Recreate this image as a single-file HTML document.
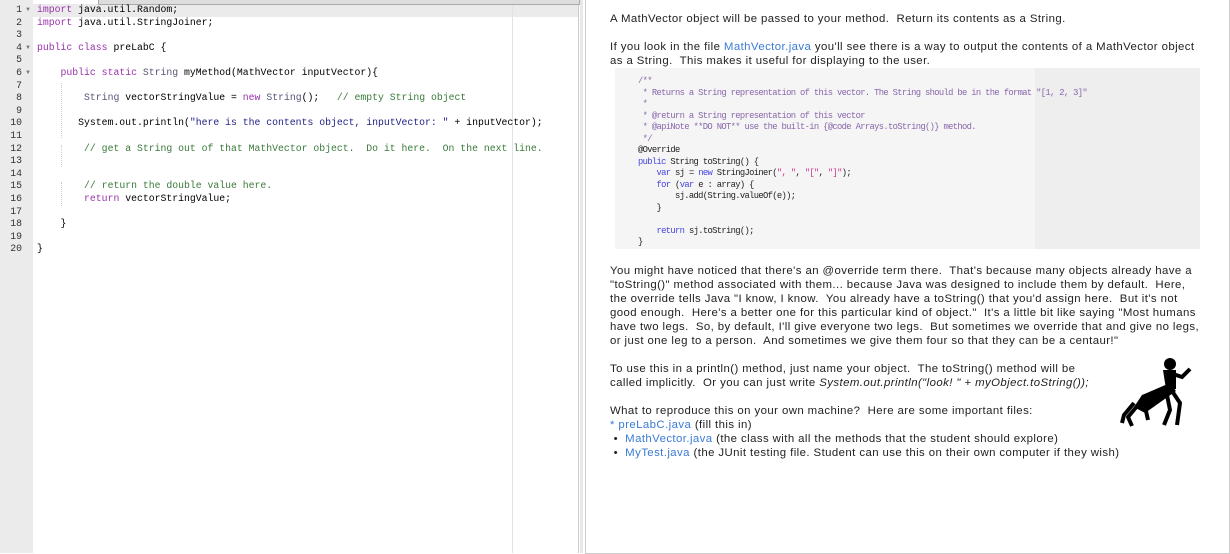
<!DOCTYPE html>
<html><head><meta charset="utf-8"><style>
body{margin:0;width:1230px;height:553px;overflow:hidden;background:#fff;position:relative;font-family:"Liberation Sans",sans-serif}
#left{position:absolute;left:0;top:0;width:578px;height:553px;background:#fff;border-right:1px solid #ccc}
#topbar{position:absolute;left:98px;top:0;width:480px;height:4px;border:1px solid #aaa;border-top:none;background:#ddd}
#gutter{position:absolute;left:0;top:0;width:33px;height:553px;background:#ebebeb}
#hl{position:absolute;left:33px;top:4px;width:545px;height:13px;background:#ebebeb}
#ruler{position:absolute;left:512px;top:4px;width:1px;height:549px;background:#e2e2e2}
.ln{position:absolute;left:0;width:22px;text-align:right;font:9.8px "Liberation Mono",monospace;color:#333}
.fold{position:absolute;left:25px;font-size:6px;color:#777}
.code{position:absolute;left:37px;font:9.8px "Liberation Mono",monospace;white-space:pre;color:#000}
.k{color:#93a}.t{color:#557}.s{color:#228}.c{color:#3a7a3a}.g{position:absolute;width:1px;border-left:1px dotted #ccc}
#sep{position:absolute;left:580px;top:0;width:3px;height:553px;background:#e8e8e8}
#right{position:absolute;left:585px;top:0;width:643px;height:553px;border:1px solid #ccc;border-top:none}
.p{position:absolute;left:610px;font-size:11.4px;line-height:14px;color:#222;white-space:pre;letter-spacing:0.42px}
a{color:#3a7bd5;text-decoration:none}
#cb{position:absolute;left:615px;top:68px;width:585px;height:181px;background:#f5f5f5}
#cb2{position:absolute;left:1035px;top:68px;width:165px;height:181px;background:#eeeeee}
.cc{position:absolute;left:638px;font:8.8px "Liberation Mono",monospace;white-space:pre;color:#222;letter-spacing:-0.65px}
.jd{color:#86a}.kw{color:#44d}.st{color:#c38}
</style></head><body>
<div id="left">
<div id="gutter"></div><div id="hl"></div><div id="ruler"></div>
<div id="topbar"></div>
</div>
<div class="ln" style="top:4px">1</div><div class="ln" style="top:16.6px">2</div><div class="ln" style="top:29.2px">3</div><div class="ln" style="top:41.8px">4</div><div class="ln" style="top:54.4px">5</div><div class="ln" style="top:67px">6</div><div class="ln" style="top:79.6px">7</div><div class="ln" style="top:92.2px">8</div><div class="ln" style="top:104.8px">9</div><div class="ln" style="top:117.4px">10</div><div class="ln" style="top:130px">11</div><div class="ln" style="top:142.6px">12</div><div class="ln" style="top:155.2px">13</div><div class="ln" style="top:167.8px">14</div><div class="ln" style="top:180.4px">15</div><div class="ln" style="top:193px">16</div><div class="ln" style="top:205.6px">17</div><div class="ln" style="top:218.2px">18</div><div class="ln" style="top:230.8px">19</div><div class="ln" style="top:243.4px">20</div>
<div class="fold" style="top:7px">▼</div><div class="fold" style="top:45px">▼</div><div class="fold" style="top:70px">▼</div>
<div class="g" style="left:61px;top:83px;height:55px"></div><div class="g" style="left:61px;top:145px;height:22px"></div><div class="g" style="left:61px;top:182px;height:24px"></div>
<div class="code" style="top:4px"><span class="k">import</span> java.util.Random;</div>
<div class="code" style="top:16.6px"><span class="k">import</span> java.util.StringJoiner;</div>
<div class="code" style="top:41.8px"><span class="k">public class</span> preLabC {</div>
<div class="code" style="top:67px">    <span class="k">public static</span> <span class="t">String</span> myMethod(MathVector inputVector){</div>
<div class="code" style="top:92.2px">        <span class="t">String</span> vectorStringValue = <span class="k">new</span> <span class="t">String</span>();   <span class="c">// empty String object</span></div>
<div class="code" style="top:117.4px">       System.out.println(<span class="s">"here is the contents object, inputVector: "</span> + inputVector);</div>
<div class="code" style="top:142.6px">        <span class="c">// get a String out of that MathVector object.  Do it here.  On the next line.</span></div>
<div class="code" style="top:180.4px">        <span class="c">// return the double value here.</span></div>
<div class="code" style="top:193px">        <span class="k">return</span> vectorStringValue;</div>
<div class="code" style="top:218.2px">    }</div>
<div class="code" style="top:243.4px">}</div>
<div id="sep"></div>
<div id="right"></div>
<div class="p" style="top:12px">A MathVector object will be passed to your method.  Return its contents as a String.</div>
<div class="p" style="top:40px">If you look in the file <a>MathVector.java</a> you'll see there is a way to output the contents of a MathVector object
as a String.  This makes it useful for displaying to the user.</div>
<div id="cb"></div><div id="cb2"></div>
<div class="cc jd" style="top:76px">/**</div>
<div class="cc jd" style="top:87.5px"> * Returns a String representation of this vector. The String should be in the format "[1, 2, 3]"</div>
<div class="cc jd" style="top:99px"> *</div>
<div class="cc jd" style="top:110.5px"> * @return a String representation of this vector</div>
<div class="cc jd" style="top:122px"> * @apiNote **DO NOT** use the built-in {@code Arrays.toString()} method.</div>
<div class="cc jd" style="top:133.5px"> */</div>
<div class="cc" style="top:145px">@Override</div>
<div class="cc" style="top:156.5px"><span class="kw">public</span> String toString() {</div>
<div class="cc" style="top:168px">    <span class="kw">var</span> sj = <span class="kw">new</span> StringJoiner(<span class="st">", "</span>, <span class="st">"["</span>, <span class="st">"]"</span>);</div>
<div class="cc" style="top:179.5px">    <span class="kw">for</span> (<span class="kw">var</span> e : array) {</div>
<div class="cc" style="top:191px">        sj.add(String.valueOf(e));</div>
<div class="cc" style="top:202.5px">    }</div>
<div class="cc" style="top:225.5px">    <span class="kw">return</span> sj.toString();</div>
<div class="cc" style="top:237px">}</div>
<div class="p" style="top:264px">You might have noticed that there's an @override term there.  That's because many objects already have a
"toString()" method associated with them... because Java was designed to include them by default.  Here,
the override tells Java "I know, I know.  You already have a toString() that you'd assign here.  But it's not
good enough.  Here's a better one for this particular kind of object."  It's a little bit like saying "Most humans
have two legs.  So, by default, I'll give everyone two legs.  But sometimes we override that and give no legs,
or just one leg to a person.  And sometimes we give them four so that they can be a centaur!"</div>
<div class="p" style="top:362px">To use this in a println() method, just name your object.  The toString() method will be
called implicitly.  Or you can just write <i>System.out.println("look! " + myObject.toString());</i></div>
<div class="p" style="top:404px">What to reproduce this on your own machine?  Here are some important files:
<a>* preLabC.java</a> (fill this in)
 •  <a>MathVector.java</a> (the class with all the methods that the student should explore)
 •  <a>MyTest.java</a> (the JUnit testing file. Student can use this on their own computer if they wish)</div>
<svg style="position:absolute;left:1120px;top:355px" width="75" height="75" viewBox="0 0 75 75">
<circle cx="50" cy="9" r="6" fill="#000"/>
<path d="M43 15 L56 15 L56 34 L46 34 Z" fill="#000"/>
<path d="M53 19 L62 22 L70 14" stroke="#000" stroke-width="4" fill="none"/>
<path d="M50 28 L56 36 L25 58 L14 52 L22 40 Z" fill="#000"/>
<path d="M18 50 L8 62 L12 71 M14 48 L4 60 L2 68 M52 36 L60 48 L57 70 M47 40 L50 55 L44 70 M26 56 L28 65" stroke="#000" stroke-width="4" fill="none" stroke-linejoin="round"/>
</svg>
</body></html>
